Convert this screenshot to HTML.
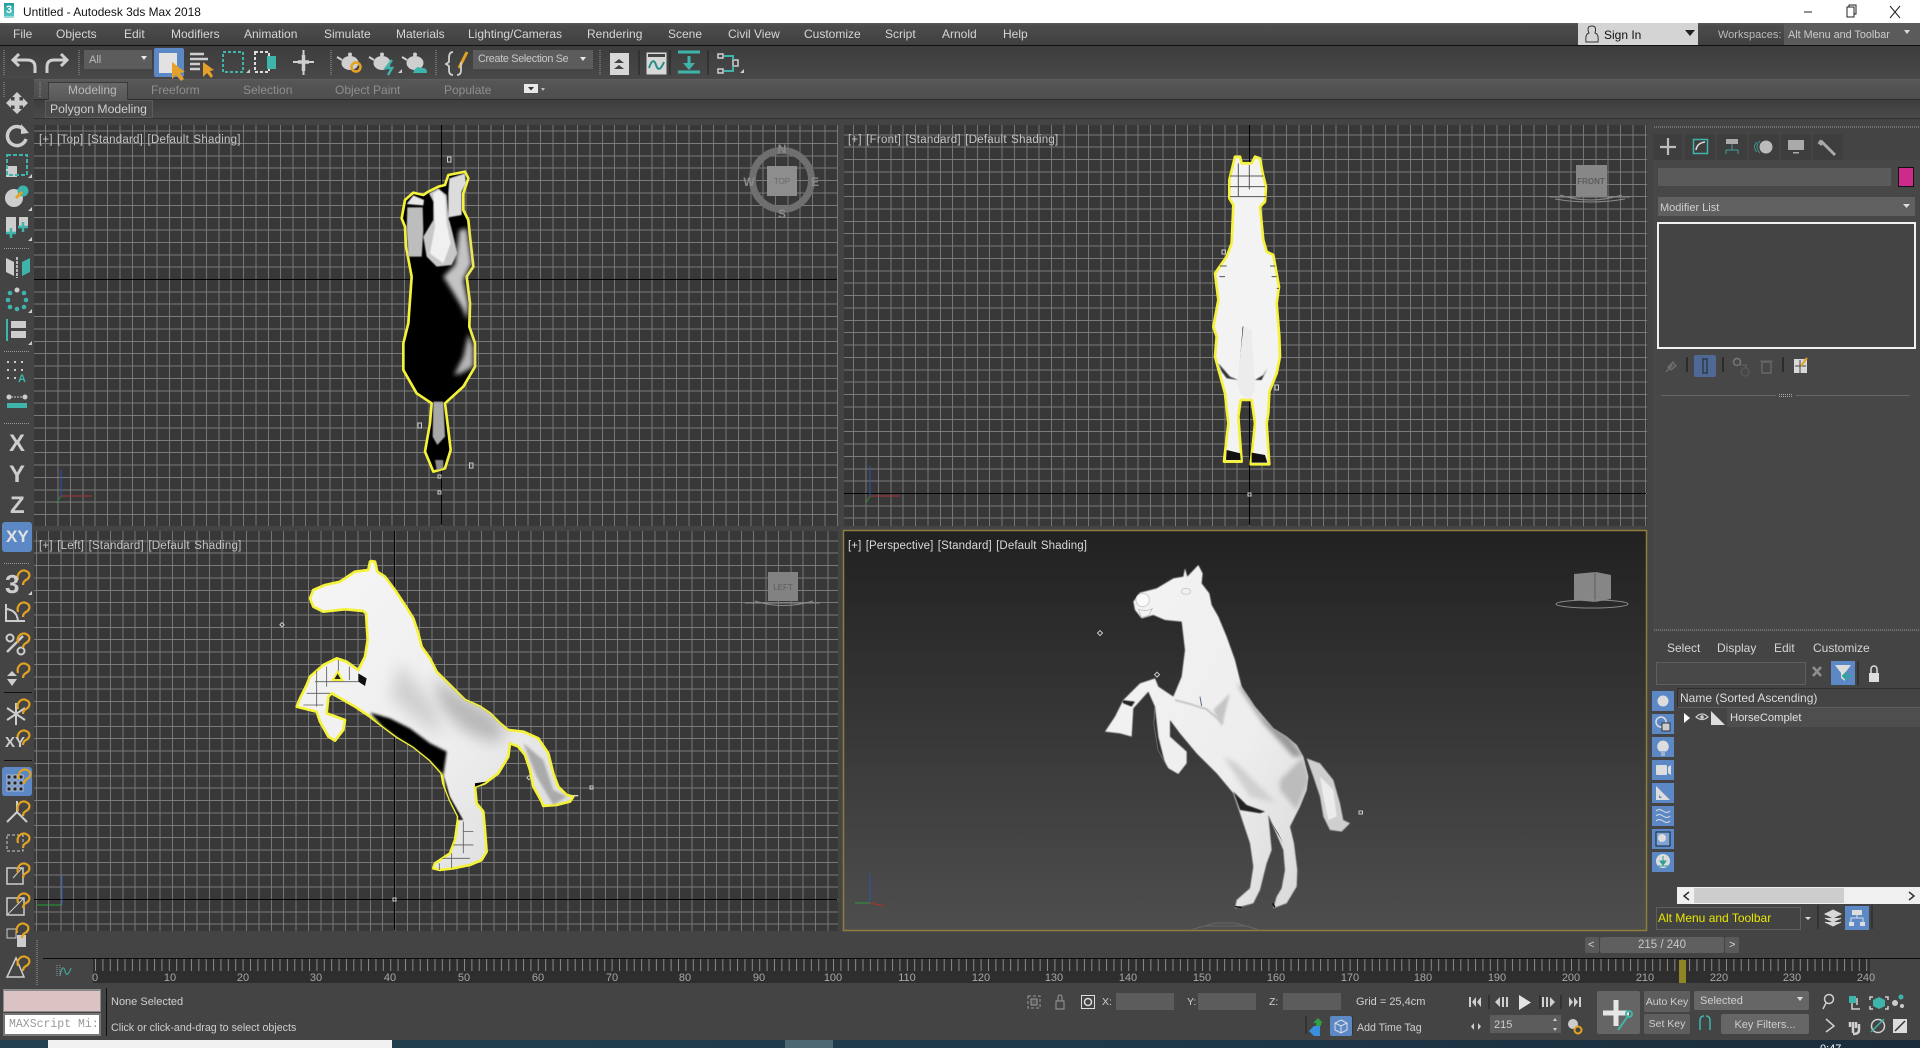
<!DOCTYPE html>
<html lang="en"><head><meta charset="utf-8"><title>Untitled - Autodesk 3ds Max 2018</title>
<style>
html,body{margin:0;padding:0;width:1920px;height:1048px;overflow:hidden;background:#444}
body{position:relative;font-family:"Liberation Sans",sans-serif}
div{position:absolute;box-sizing:border-box}
.t{white-space:nowrap;font-size:12px;line-height:14px;color:#d6d6d6}
.s{font-size:11px;color:#cfcfcf}
.vl{white-space:nowrap;font-size:11.5px;line-height:14px;color:#c4c4c4;letter-spacing:.23px;word-spacing:1px}
svg{position:absolute;left:0;top:0}
</style></head><body>

<div style="left:0;top:0;width:1920px;height:23px;background:#fff"></div>
<div style="left:4px;top:3px;width:10px;height:15px;background:linear-gradient(#1f9d9d,#57c4c4);border-bottom:2px solid #9ad8d8"></div>
<div class="t" style="left:5px;top:3px;width:8px;text-align:center;font-size:11px;font-weight:bold;color:#fff">3</div>
<div class="t" style="left:23px;top:5px;color:#111;font-size:11.9px">Untitled - Autodesk 3ds Max 2018</div>

<div style="left:0;top:23px;width:1920px;height:23px;background:linear-gradient(#5a5a5a 0,#4c4c4c 2px,#404040 100%);border-bottom:1px solid #111"></div>
<div class="t" style="left:13px;top:27px">File</div>
<div class="t" style="left:56px;top:27px">Objects</div>
<div class="t" style="left:124px;top:27px">Edit</div>
<div class="t" style="left:171px;top:27px">Modifiers</div>
<div class="t" style="left:244px;top:27px">Animation</div>
<div class="t" style="left:324px;top:27px">Simulate</div>
<div class="t" style="left:396px;top:27px">Materials</div>
<div class="t" style="left:468px;top:27px">Lighting/Cameras</div>
<div class="t" style="left:587px;top:27px">Rendering</div>
<div class="t" style="left:668px;top:27px">Scene</div>
<div class="t" style="left:728px;top:27px">Civil View</div>
<div class="t" style="left:804px;top:27px">Customize</div>
<div class="t" style="left:885px;top:27px">Script</div>
<div class="t" style="left:942px;top:27px">Arnold</div>
<div class="t" style="left:1003px;top:27px">Help</div>
<div style="left:1578px;top:23px;width:120px;height:22px;background:#d4d4d4"></div>
<div class="t" style="left:1604px;top:28px;color:#111">Sign In</div>
<div class="t" style="left:1718px;top:28px;color:#bbb;font-size:11px">Workspaces:</div>
<div style="left:1784px;top:23px;width:136px;height:22px;background:#5b5b5b"></div>
<div class="t" style="left:1788px;top:28px;font-size:10.8px;color:#ccc">Alt Menu and Toolbar</div>

<div style="left:0;top:46px;width:1920px;height:33px;background:linear-gradient(#3d3d3d,#484848)"></div>
<div style="left:84px;top:50px;width:68px;height:19px;background:#5c5c5c"></div>
<div class="t" style="left:89px;top:53px;font-size:11px;color:#bbb">All</div>
<div style="left:154px;top:48px;width:30px;height:29px;background:#5c88c6;border-radius:2px"></div>
<div style="left:473px;top:50px;width:120px;height:19px;background:#5c5c5c"></div>
<div class="t" style="left:478px;top:52px;font-size:10.8px;letter-spacing:-.3px;color:#c8c8c8">Create Selection Se</div>

<div style="left:34px;top:79px;width:1886px;height:21px;background:linear-gradient(#606060 0,#565656 2px,#4e4e4e 100%);border-bottom:1px solid #2c2c2c"></div>
<div style="left:48px;top:82px;width:80px;height:18px;background:linear-gradient(#676767,#585858);border:1px solid #3a3a3a;border-bottom:0"></div>
<div class="t" style="left:68px;top:83px;color:#b8b8b8">Modeling</div>
<div class="t" style="left:151px;top:83px;color:#8e8e8e">Freeform</div>
<div class="t" style="left:243px;top:83px;color:#8e8e8e">Selection</div>
<div class="t" style="left:335px;top:83px;color:#8e8e8e">Object Paint</div>
<div class="t" style="left:444px;top:83px;color:#8e8e8e">Populate</div>
<div style="left:34px;top:100px;width:1886px;height:19px;background:linear-gradient(#3d3d3d,#4a4a4a);border-bottom:1px solid #333"></div>
<div style="left:45px;top:100px;width:108px;height:18px;background:#4a4a4a;border:1px solid #5c5c5c"></div>
<div class="t" style="left:50px;top:102px;color:#cfcfcf;font-size:12.2px">Polygon Modeling</div>

<!-- backgrounds beneath the icon layer -->
<div style="left:1653px;top:160px;width:267px;height:472px;background:#474747"></div>
<div style="left:1490px;top:1015px;width:71px;height:18px;background:#5c5c5c"></div>
<div style="left:1694px;top:991px;width:115px;height:19px;background:#666;border-radius:2px"></div>
<div style="left:1677px;top:887px;width:243px;height:17px;background:#f0f0f0"></div>
<div style="left:1694px;top:888px;width:150px;height:15px;background:#cdcdcd"></div>

<!-- viewports -->
<svg width="1920" height="1048" viewBox="0 0 1920 1048">
<defs>
<pattern id="ticks" patternUnits="userSpaceOnUse" width="7.38" height="30" x="95" y="958"><rect width="1" height="13" fill="#8a8a8a"/></pattern>
<linearGradient id="pg" x1="0" y1="0" x2="0" y2="1"><stop offset="0" stop-color="#212121"/><stop offset="1" stop-color="#4e4e4e"/></linearGradient>
<linearGradient id="hl" x1="0" y1="0" x2="1" y2="1"><stop offset="0" stop-color="#f6f6f6"/><stop offset=".6" stop-color="#ededed"/><stop offset="1" stop-color="#d8d8d8"/></linearGradient>
<linearGradient id="hp" x1="0" y1="0" x2="1" y2="1"><stop offset="0" stop-color="#f4f4f4"/><stop offset=".6" stop-color="#eeeeee"/><stop offset="1" stop-color="#d8d8d8"/></linearGradient>
<filter id="b1" x="-5%" y="-5%" width="110%" height="110%"><feGaussianBlur stdDeviation="1.5"/></filter>
<filter id="b2" x="-30%" y="-30%" width="160%" height="160%"><feGaussianBlur stdDeviation="4"/></filter>
<filter id="b3" x="-40%" y="-40%" width="180%" height="180%"><feGaussianBlur stdDeviation="7"/></filter>
<filter id="b8" x="-60%" y="-60%" width="220%" height="220%"><feGaussianBlur stdDeviation="22"/></filter>
<clipPath id="lc"><path d="M245 93L255 95 262 125 285 140 315 180 345 225 370 265 385 310 395 350 420 385 440 425 480 465 525 510 570 530 600 550 630 580 655 600 700 605 745 625 775 670 790 730 805 770 830 795 850 800 840 815 800 825 760 828 755 815 730 770 720 720 705 675 685 650 660 640 655 680 625 730 585 760 555 770 560 820 580 845 585 900 590 965 575 990 540 1005 490 1015 450 1020 430 1015 435 1000 480 970 495 930 505 860 480 810 460 760 455 730 420 690 370 650 320 620 280 590 240 560 195 530 125 490 115 500 110 550 165 570 160 600 135 632 115 620 90 575 80 545 20 530 30 505 50 465 60 440 100 405 140 385 170 395 205 420 225 380 233 330 228 250 220 243 165 238 100 245 70 230 60 205 70 180 105 165 150 155 195 125 235 120 240 95Z"/></clipPath>
<clipPath id="pc"><path d="M285 55L292 80 325 45 338 70 335 100 358 130 365 165 385 200 410 260 435 330 455 410 495 470 550 535 590 560 620 585 640 620 655 680 650 720 630 770 600 830 612 880 622 960 620 1010 590 1060 550 1075 560 1040 575 1015 585 960 580 900 535 795 545 900 530 940 510 1020 490 1060 435 1075 440 1050 480 1015 490 950 480 880 450 790 430 730 380 670 320 610 270 550 240 510 240 560 290 605 290 640 265 672 235 655 205 600 192 520 195 470 175 425 130 475 125 560 90 550 45 545 75 500 100 450 150 400 195 385 205 410 250 440 275 380 285 300 275 215 225 210 190 195 155 205 135 180 130 155 150 128 200 115 250 85 280 80Z"/></clipPath>
<g id="mag"><path d="M-5 3C-7-4-1-8 3-6 8-4 7 1 3 3 1 4 0 6 0 8" fill="none" stroke="#e3a21f" stroke-width="2.2"/></g>
</defs>

<!-- grids drawn as dashed wide lines so each grid line lands on a whole pixel -->
<g shape-rendering="crispEdges" stroke-dasharray="1 11.37" fill="none">
<!-- Top -->
<rect x="34" y="125" width="804" height="401" fill="#383838" stroke="none"/>
<path d="M34 325.500H838" stroke="#767676" stroke-width="401" stroke-dashoffset="1.21"/>
<path d="M436 125V526" stroke="#7a7a7a" stroke-width="804" stroke-dashoffset="6.81"/>
<!-- Front -->
<rect x="844" y="125" width="803" height="401" fill="#383838" stroke="none"/>
<path d="M844 325.500H1647" stroke="#767676" stroke-width="401" stroke-dashoffset="3.21"/>
<path d="M1245.500 125V526" stroke="#7a7a7a" stroke-width="803" stroke-dashoffset="3.10"/>
<!-- Left -->
<rect x="34" y="531" width="804" height="400" fill="#383838" stroke="none"/>
<path d="M34 731H838" stroke="#767676" stroke-width="400" stroke-dashoffset="10.6"/>
<path d="M436 531V931" stroke="#7a7a7a" stroke-width="804" stroke-dashoffset="3.10"/>
</g>
<path d="M34 279.5H837M441.5 125V525" stroke="#000" stroke-width="1"/>
<path d="M844 493.5H1646M1249.5 125V525" stroke="#000" stroke-width="1"/>
<path d="M34 899.5H837M394.5 531V930" stroke="#000" stroke-width="1"/>
<!-- Perspective -->
<rect x="843.5" y="530.5" width="803" height="400" fill="url(#pg)" stroke="#8f7d3e" stroke-width="1.5"/>
<path d="M1190 930 1215 923H1235L1260 930M1205 926H1245" stroke="#666" fill="none"/>

<!-- Top horse -->
<g transform="translate(380 130) scale(.3333)">
<path d="M205 135 255 125 265 145 250 190 250 240 265 270 270 320 280 410 260 440 270 520 268 590 285 640 285 710 250 770 195 820 205 900 212 960 195 1015 160 1025 135 965 150 880 155 820 110 790 70 720 70 640 85 580 95 440 78 350 75 290 65 265 75 210 100 188 130 195 145 185 175 170 195 165Z" fill="#000" stroke="#f5f23a" stroke-width="8" stroke-linejoin="round"/>
<g filter="url(#b1)">
<path d="M82 232 128 232 130 300 125 380 85 380 80 300Z" fill="#bdbdbd"/>
<path d="M80 222 100 196 132 210 130 226 100 224Z" fill="#e8e8e8"/>
<path d="M208 145 255 130 258 160 245 185 245 255 205 262 205 190Z" fill="#dcdcdc"/>
<path d="M147 190 175 175 200 195 205 260 218 310 232 370 215 405 170 410 140 380 130 320 160 270 160 215Z" fill="#c8c8c8"/>
<path d="M160 190 178 180 195 200 200 280 212 340 190 400 150 370 165 290Z" fill="#f0f0f0"/>
<path d="M160 815 190 815 195 920 172 945 158 920Z" fill="#a8a8a8"/>
<path d="M165 990 190 990 190 1015 170 1020Z" fill="#888"/>
</g>
<path d="M238 300 260 295 275 400 250 450 265 520 262 570 245 530 215 480 190 440 225 405Z" fill="#c4c4c4" filter="url(#b3)"/>
<path d="M265 610 280 650 280 710 245 730 222 735 250 680Z" fill="#b5b5b5" filter="url(#b3)"/>
<path d="M205 268 255 268 258 285 230 292Z" fill="#000"/>
</g>
<g fill="none" stroke="#ccc" stroke-width="1">
<rect x="447.5" y="157" width="3.5" height="5"/><rect x="418" y="423" width="3.500" height="5"/><rect x="469.5" y="463" width="3.5" height="5"/><rect x="438" y="475" width="3" height="3"/><rect x="438" y="491" width="3" height="3"/>
<rect x="1222" y="250" width="3.5" height="4"/><rect x="1275" y="385" width="3.5" height="5"/><rect x="1248" y="493" width="3" height="3"/>
<rect x="393" y="898" width="3" height="3"/><rect x="590" y="786" width="3" height="3"/><rect x="281" y="623" width="3" height="3" transform="rotate(45 282 624)"/><rect x="528" y="776" width="3" height="3" transform="rotate(45 529 777)"/>
<rect x="1099" y="631" width="3.5" height="3.5" transform="rotate(45 1100 632)"/><rect x="1155" y="673" width="3.5" height="3.5" transform="rotate(45 1157 675)"/><rect x="1359" y="811" width="3.5" height="3"/>
</g>

<!-- Front horse -->
<g transform="translate(1180 130) scale(.3333)">
<path d="M165 80 180 80 185 100 215 100 225 80 240 85 248 130 258 170 255 215 240 230 250 330 260 365 280 375 290 430 297 470 290 520 298 620 300 680 290 730 268 785 265 850 260 880 268 1003 212 1003 218 950 225 880 215 810 182 810 175 860 185 995 132 995 145 880 135 790 105 680 110 620 100 590 115 510 105 430 140 380 155 340 160 225 148 205 148 150Z" fill="#f3f3f3" stroke="#f5f23a" stroke-width="8" stroke-linejoin="round"/>
<path d="M115 700 150 740 175 750 140 745 125 725ZM262 715 245 750 225 750 250 735Z" fill="#333" filter="url(#b1)"/>
<path d="M140 960 180 970 182 990 138 990ZM215 968 255 975 262 998 215 998Z" fill="#111"/>
<path d="M190 590 178 740" stroke="#111" stroke-width="4" fill="none"/>
<path d="M190 590 215 600 225 780 205 810 180 790 172 760Z" fill="#ececec"/>
<path d="M150 138H250M150 170H255M150 200H258M175 100V200M208 105V178M120 408H140M270 408H285M118 440H135M275 440H290M290 475H297" stroke="#555" stroke-width="3" fill="none"/>
</g>

<!-- Left horse -->
<g transform="translate(290 530) scale(.3333)">
<path d="M245 93L255 95 262 125 285 140 315 180 345 225 370 265 385 310 395 350 420 385 440 425 480 465 525 510 570 530 600 550 630 580 655 600 700 605 745 625 775 670 790 730 805 770 830 795 850 800 840 815 800 825 760 828 755 815 730 770 720 720 705 675 685 650 660 640 655 680 625 730 585 760 555 770 560 820 580 845 585 900 590 965 575 990 540 1005 490 1015 450 1020 430 1015 435 1000 480 970 495 930 505 860 480 810 460 760 455 730 420 690 370 650 320 620 280 590 240 560 195 530 125 490 115 500 110 550 165 570 160 600 135 632 115 620 90 575 80 545 20 530 30 505 50 465 60 440 100 405 140 385 170 395 205 420 225 380 233 330 228 250 220 243 165 238 100 245 70 230 60 205 70 180 105 165 150 155 195 125 235 120 240 95Z" fill="url(#hl)" stroke="#f5f23a" stroke-width="8" stroke-linejoin="round"/>
<g clip-path="url(#lc)">
<path d="M430 440 520 500 610 550 650 610 610 640 520 600 450 530Z" fill="#b8b8b8" filter="url(#b8)"/>
<path d="M330 400 430 520 460 620 380 570 300 500Z" fill="#d0d0d0" filter="url(#b8)"/>
<path d="M240 548 300 565 360 595 420 640 470 665 460 735 420 695 370 655 320 622 280 592Z" fill="#000" filter="url(#b2)"/>
<path d="M205 430 230 445 225 468 205 455Z" fill="#111"/>
<path d="M460 730 480 800 520 870 505 870 470 800Z" fill="#222" filter="url(#b1)"/>
<path d="M700 640 760 690 790 780 830 800 790 825 740 740Z" fill="#aaa" filter="url(#b2)"/>
<path d="M555 760 590 755 555 772Z" fill="#000"/>
<path d="M50 490H120M75 455H205M80 410V530M110 410V470M145 390V450M178 410V450M40 525H100M520 905H550M520 875V970M490 945H550M435 985H540M485 970V1015M448 1000V1020" stroke="#5a5a5a" stroke-width="2.500" fill="none"/>
</g>
<path d="M143 425 157 450H128Z" fill="#222" stroke="#f5f23a" stroke-width="6"/>
<path d="M850 797 865 797" stroke="#ddd" stroke-width="4"/>
</g>

<!-- Persp horse -->
<g transform="translate(1090 550) scale(.3333)">
<g filter="url(#b1)">
<path d="M285 55L292 80 325 45 338 70 335 100 358 130 365 165 385 200 410 260 435 330 455 410 495 470 550 535 590 560 620 585 640 620 655 680 650 720 630 770 600 830 612 880 622 960 620 1010 590 1060 550 1075 560 1040 575 1015 585 960 580 900 535 795 545 900 530 940 510 1020 490 1060 435 1075 440 1050 480 1015 490 950 480 880 450 790 430 730 380 670 320 610 270 550 240 510 240 560 290 605 290 640 265 672 235 655 205 600 192 520 195 470 175 425 130 475 125 560 90 550 45 545 75 500 100 450 150 400 195 385 205 410 250 440 275 380 285 300 275 215 225 210 190 195 155 205 135 180 130 155 150 128 200 115 250 85 280 80Z" fill="url(#hp)"/>
</g>
<g clip-path="url(#pc)">
<path d="M440 400 520 520 610 620 640 620 600 560 520 500 470 420Z" fill="#999" filter="url(#b3)"/>
<path d="M370 480 420 430 395 530Z" fill="#c4c4c4" filter="url(#b2)"/>
<path d="M570 690 640 620 660 690 620 780 570 720Z" fill="#bcbcbc" filter="url(#b3)"/>
<path d="M400 620 480 740 560 760 500 700 440 640Z" fill="#d0d0d0" filter="url(#b3)"/>
<path d="M430 725 470 765 525 785 510 790 450 780Z" fill="#222" filter="url(#b1)"/>
<path d="M195 470 205 560 225 640 205 620 190 520Z" fill="#333" filter="url(#b1)"/>
<path d="M95 450 135 455 125 470 100 460Z" fill="#222" filter="url(#b1)"/>
<path d="M530 795 580 880 565 850Z" fill="#444"/>
</g>
<path d="M650 625 690 640 730 690 750 760 760 810 780 820 755 845 720 840 700 800 690 740 670 680Z" fill="#cfcfcf" filter="url(#b1)"/>
<path d="M690 680 730 720 740 800 715 810 700 740Z" fill="#ececec" filter="url(#b1)"/>
<path d="M330 440 335 468" stroke="#5a6a80" stroke-width="3"/>
<path d="M255 450 300 462 350 478 400 520" stroke="#c7c7c7" stroke-width="6" fill="none" filter="url(#b1)"/>
<ellipse cx="158" cy="150" rx="20" ry="20" fill="#fafafa" stroke="#ccc" stroke-width="3"/>
<path d="M145 178q25 8 42-2l-10 20-22 6Z" fill="#f5f5f5" stroke="#bbb" stroke-width="2"/>
<ellipse cx="288" cy="124" rx="14" ry="9" fill="none" stroke="#ccc" stroke-width="3"/>
<path d="M435 1070 455 1072M548 1060 555 1072" stroke="#000" stroke-width="4"/>
</g>

<!-- view cubes -->
<g>
<circle cx="782" cy="180" r="29.5" fill="none" stroke="#6f6f6f" stroke-width="7"/>
<rect x="767" y="166" width="30" height="30" fill="#8d8d8d"/>
<text x="782" y="184" font-size="8" fill="#6a6a6a" text-anchor="middle" font-family="Liberation Sans">TOP</text>
<g font-family="Liberation Sans" font-weight="bold" font-size="12" fill="#8a8a8a" text-anchor="middle"><text x="782" y="153">N</text><text x="815" y="186">E</text><text x="782" y="218">S</text><text x="749" y="186">W</text></g>
<rect x="1576" y="165" width="31" height="31" fill="#878787"/>
<text x="1591" y="184" font-size="8" font-weight="bold" fill="#5c5c5c" text-anchor="middle" font-family="Liberation Sans">FRONT</text>
<path d="M1550 197H1630M1560 195q30 10 62 0M1555 199q35 6 70 0" stroke="#8a8a8a" fill="none"/>
<rect x="768" y="572" width="30" height="29" fill="#828282"/>
<text x="783" y="590" font-size="8" fill="#5c5c5c" text-anchor="middle" font-family="Liberation Sans">LEFT</text>
<path d="M745 603H820M755 601q28 9 58 0" stroke="#8a8a8a" fill="none"/>
<path d="M1574 574 1596 572 1611 575V599L1595 602 1574 600Z" fill="#868686"/>
<path d="M1595 572V602" stroke="#5f5f5f"/>
<ellipse cx="1592" cy="604" rx="36" ry="4" fill="none" stroke="#8a8a8a"/>
</g>

<!-- axes -->
<g stroke-width="1" fill="none">
<path d="M61 496H92" stroke="#a33"/><path d="M61 496V470" stroke="#2a55b0"/><path d="M61 496 56 503" stroke="#2c8a3a"/>
<path d="M870 496H900" stroke="#a33"/><path d="M870 496V466" stroke="#2a55b0"/><path d="M870 496 866 503" stroke="#2c8a3a"/>
<path d="M62 905V875" stroke="#2a55b0"/><path d="M62 905H36" stroke="#2c9a3a"/>
<path d="M870 903V874" stroke="#2a55b0"/><path d="M870 903H855" stroke="#2c9a3a"/><path d="M870 903 884 906" stroke="#a33"/>
</g>

<!-- toolbar icons -->
<g fill="none" stroke="#cfcfcf">
<path d="M19 54 13 60 19 66M13 60H27Q35 60 35 67V73" stroke-width="3"/>
<path d="M61 54 67 60 61 66M67 60H54Q47 60 47 67V73" stroke-width="3"/>
<g stroke-dasharray="1 1" stroke="#9a9a9a"><path d="M4 50V75M79 50V75M331 50V75M436 50V75M600 50V75M4 82V98M40 82V98"/></g>
<rect x="159" y="53" width="18" height="20" fill="#e2e2e2" stroke="none"/>
<path d="M172 62 172 79 176 75 181 81 184 79 180 73 185 72Z" fill="#e5a02a" stroke="none"/>
<path d="M190 54H204M190 59H208M190 64H200M190 69H200" stroke-width="2.5"/>
<path d="M203 62 203 77 207 73 211 78 213 76 210 71 214 70Z" fill="#e5a02a" stroke="none"/>
<rect x="223" y="52" width="20" height="20" stroke="#3fb4ab" stroke-width="2" stroke-dasharray="3 2"/>
<rect x="255" y="52" width="14" height="20" stroke="#ddd" stroke-width="2" stroke-dasharray="3 2"/>
<rect x="267" y="56" width="9" height="13" fill="#3fb4ab" stroke="none"/>
<path d="M303.500 50V75M293 62H314" stroke-width="2"/><path d="M303.500 55V71M298 62H309" stroke-width="3.5"/>
<g fill="#cfcfcf" stroke="none"><ellipse cx="350" cy="63" rx="8.500" ry="7"/><circle cx="350" cy="54.500" r="2"/><ellipse cx="382" cy="63" rx="8.500" ry="7"/><circle cx="382" cy="54.500" r="2"/><ellipse cx="415" cy="63" rx="8.500" ry="7"/><circle cx="415" cy="54.500" r="2"/></g>
<path d="M342 60 337 57M374 60 369 57M407 60 402 57" stroke-width="2"/>
<circle cx="356" cy="67" r="4.500" stroke="#e3a21f" stroke-width="2.500"/>
<path d="M392 60 386 68H392L388 75" stroke="#3fb4ab" stroke-width="2.500"/>
<path d="M413 73q3-8 8-5 6-1 6 5Z" fill="#3fb4ab" stroke="none"/>
<path d="M453 52Q449 52 449 58V62L446 64 449 66V70Q449 75 453 75" stroke-width="1.800"/>
<path d="M459 68 467 52" stroke="#e3a21f" stroke-width="3"/>
<path d="M461 62V70Q461 75 457 75" stroke-width="1.800"/>
<rect x="610" y="53" width="19" height="22" fill="#d8d8d8" stroke="none"/><path d="M619 59 624 63H614ZM619 65 624 69H614Z" fill="#444" stroke="none"/>
<path d="M639 50V75M670 50V75M708 50V75" stroke="#222"/>
<rect x="646.500" y="52.500" width="20" height="22" fill="#d8d8d8" stroke="none"/><rect x="648" y="54" width="17" height="3" fill="#444" stroke="none"/>
<path d="M649 68Q653 56 656 65T664 62" stroke="#268f88" stroke-width="2"/>
<path d="M678 52H700M678 72H700" stroke="#3fb4ab" stroke-width="3"/><path d="M689 56V66" stroke="#3fb4ab" stroke-width="3"/><path d="M683 63H695L689 70Z" fill="#3fb4ab" stroke="none"/>
<path d="M718 54h5v4h-5ZM718 69h5v4h-5ZM733 60h5v6h-5Z" stroke-width="1.500"/><path d="M724 56H733V60M724 71H733V66" stroke="#3fb4ab" stroke-width="2"/>
</g>
<g fill="#e8e8e8"><path d="M141 56h6l-3 4ZM580 57h6l-3 4Z"/><path d="M524 84h14v9h-14Z"/><path d="M541 88h4l-2 3Z" fill="#bbb"/></g>
<path d="M528 87h6l-3 3.500Z" fill="#333"/>
<path d="M246 73l4-4v4ZM398 73l4-4v4ZM740 73l4-4v4Z" fill="#ccc"/>
<path d="M1804 12h8" stroke="#222" stroke-width="1"/>
<rect x="1847" y="7" width="7" height="10" fill="#fff" stroke="#222"/><path d="M1849 7V5H1856V14H1854" fill="none" stroke="#222"/>
<path d="M1890 6 1900 18M1900 6 1890 18" stroke="#222" stroke-width="1"/>
<path d="M1586 42q-1-8 3-9-3-7 3-7 5 0 3 7 4 1 3 9Z" fill="none" stroke="#333"/>
<path d="M1685 30h10l-5 6Z" fill="#222"/>
<path d="M1904 30h6l-3 4Z" fill="#ddd"/>

<!-- left tools -->
<g fill="#cdcdcd">
<path transform="translate(17 103)" d="M0-11 5-6H2.500V-2.500H6V-5L11 0 6 5V2.500H2.500V6H5L0 11-5 6H-2.500V2.500H-6V5L-11 0-6-5V-2.500H-2.500V-6H-5Z"/>
<path d="M25 131A9.500 9.500 0 1 0 26 139" fill="none" stroke="#cdcdcd" stroke-width="3.500"/><path d="M21 124 21 134 29 133Z"/>
<rect x="6" y="166" width="11" height="11"/>
<rect x="7" y="155" width="20" height="20" fill="none" stroke="#3fb4ab" stroke-width="2" stroke-dasharray="4 2"/>
<circle cx="14" cy="198" r="9"/><circle cx="23" cy="191" r="5.500" fill="#3fb4ab"/><path d="M16 198 22 192" stroke="#e3a21f" stroke-width="3"/>
<rect x="6" y="217" width="10" height="15"/><rect x="19" y="217" width="9" height="9"/><path d="M11 228V238M6 233H16M23 222V232M18 227H28" stroke="#3fb4ab" stroke-width="2.500" fill="none"/>
<path d="M6 258 14 262V276L6 272Z"/><path d="M22 262 30 258V272L22 276Z" fill="#3fb4ab"/><path d="M17 257V278" stroke="#ddd" stroke-width="1.500" stroke-dasharray="3 1"/>
<g fill="#3fb4ab"><circle cx="17" cy="290" r="2.500" fill="#cdcdcd"/><circle cx="24" cy="293" r="2.300"/><circle cx="26" cy="300" r="2.300"/><circle cx="24" cy="307" r="2.300"/><circle cx="17" cy="309" r="2.300"/><circle cx="10" cy="307" r="2.300"/><circle cx="8" cy="300" r="2.300"/><circle cx="10" cy="293" r="2.300"/></g>
<rect x="11" y="321" width="15" height="7"/><rect x="11" y="331" width="15" height="7"/><path d="M7 319V341" stroke="#3fb4ab" stroke-width="2"/>
<g><rect x="7" y="361" width="2" height="2"/><rect x="14" y="361" width="2" height="2"/><rect x="21" y="361" width="2" height="2"/><rect x="7" y="369" width="2" height="2"/><rect x="14" y="369" width="2" height="2"/><rect x="21" y="369" width="2" height="2"/><rect x="7" y="377" width="2" height="2"/><rect x="14" y="377" width="2" height="2"/></g>
<circle cx="9" cy="397" r="2.500"/><circle cx="25" cy="397" r="2.500"/><path d="M11 397H23" stroke="#cdcdcd" stroke-dasharray="2 1"/>
<rect x="7" y="403" width="20" height="5" fill="#3fb4ab"/>
<path d="M4 248.500H30M4 351.500H30M4 423.500H30M4 563.500H30M4 563.500H30" stroke="#9b9b9b" stroke-dasharray="1 1" fill="none"/>
<path d="M4 692.500H32M4 760.500H32" stroke="#111" fill="none"/>
<rect x="2" y="522" width="30" height="30" rx="3" fill="#5c88c6"/>
<rect x="2" y="767" width="30" height="29" rx="3" fill="#5c88c6"/>
<g><rect x="7" y="775" width="19" height="17" fill="none"/><path d="M7 775h4v4h-4zM13 775h4v4h-4zM19 775h4v4h-4zM7 781h4v4h-4zM13 781h4v4h-4zM19 781h4v4h-4zM7 787h4v4h-4zM13 787h4v4h-4zM19 787h4v4h-4z" fill="#222" stroke="#cfd8e8" stroke-width=".8"/></g>
<path d="M6 604V621H25M6 609Q17 610 18 621" fill="none" stroke="#cdcdcd" stroke-width="2"/>
<path d="M7 652 23 636" stroke="#cdcdcd" stroke-width="2.500"/><circle cx="10" cy="638" r="3.500" fill="none" stroke="#cdcdcd" stroke-width="2"/><circle cx="21" cy="651" r="3.500" fill="none" stroke="#cdcdcd" stroke-width="2"/>
<path d="M12 671 17 676H7ZM12 686 17 679H7Z"/>
<path d="M16 703V725M7 708 25 720M25 708 7 720" stroke="#cdcdcd" stroke-width="2" fill="none"/>
<path d="M17 812V801M17 812 7 822M17 812 27 822" stroke="#cdcdcd" stroke-width="2" fill="none"/>
<rect x="7" y="835" width="16" height="16" fill="none" stroke="#cdcdcd" stroke-dasharray="3 2"/>
<rect x="7" y="868" width="16" height="16" fill="none" stroke="#cdcdcd" stroke-width="1.500"/><path d="M13 878 22 868" stroke="#cdcdcd"/>
<rect x="7" y="898" width="17" height="17" fill="none" stroke="#cdcdcd" stroke-width="1.500"/><path d="M7 915 24 898" stroke="#cdcdcd"/>
<rect x="7" y="929" width="9" height="9" fill="none" stroke="#cdcdcd"/><rect x="17" y="935" width="9" height="12"/>
<path d="M7 977 16 958 24 977Z" fill="none" stroke="#cdcdcd" stroke-width="1.500"/>
</g>
<text x="18" y="382" font-size="11" font-weight="bold" fill="#3fb4ab" font-family="Liberation Sans">A</text>
<g><use href="#mag" x="23" y="577"/><use href="#mag" x="23" y="609"/><use href="#mag" x="23" y="640"/><use href="#mag" x="23" y="670"/><use href="#mag" x="23" y="706"/><use href="#mag" x="23" y="737"/><use href="#mag" x="24" y="776"/><use href="#mag" x="23" y="808"/><use href="#mag" x="23" y="840"/><use href="#mag" x="23" y="870"/><use href="#mag" x="23" y="900"/><use href="#mag" x="22" y="930"/><use href="#mag" x="23" y="963"/></g>
<path d="M28 178l4-4v4ZM28 211l4-4v4ZM28 241l4-4v4ZM28 313l4-4v4ZM28 345l4-4v4ZM28 595l4-4v4Z" fill="#ccc"/>
<path d="M37 940V985" stroke="#9b9b9b" stroke-dasharray="1 1"/>

<!-- right panel icons -->
<path d="M1654 127H1920" stroke="#9b9b9b" stroke-dasharray="1 1"/>
<path d="M1654 630H1920" stroke="#9b9b9b" stroke-dasharray="1 1"/>
<g>
<path d="M1653 160V137q0-3 3-3h23q3 0 3 3V160M1685 160V137q0-3 3-3h24q3 0 3 3V160M1717 160V137q0-3 3-3h24q3 0 3 3V160M1749 160V137q0-3 3-3h24q3 0 3 3V160M1781 160V137q0-3 3-3h24q3 0 3 3V160M1813 160V137q0-3 3-3h24q3 0 3 3V160" fill="#3e3e3e"/>
<path d="M1668 138V155M1660 147H1676" stroke="#bcbcbc" stroke-width="2.200"/>
<rect x="1693.500" y="139.500" width="14" height="14" fill="none" stroke="#3fb4ab" stroke-width="1.500"/><path d="M1696 150Q1697 143 1705 142" stroke="#ddd" fill="none" stroke-width="1.500"/>
<rect x="1726" y="139" width="12" height="5" fill="#aaa"/><path d="M1732 144V150M1726 154V150H1738V154" stroke="#3fa09a" fill="none"/>
<circle cx="1766" cy="147" r="6.500" fill="#bbb"/><path d="M1760 141Q1754 147 1760 153M1757 142Q1752 147 1757 152" stroke="#3f8f8a" fill="none"/>
<rect x="1788" y="140" width="16" height="10" fill="#aaa"/><rect x="1793" y="152" width="6" height="1.500" fill="#aaa"/>
<path d="M1821 141 1835 155" stroke="#aaa" stroke-width="3"/><path d="M1821 140l-2 3 3 2" stroke="#aaa" fill="none" stroke-width="2"/>
<path d="M1666 372 1672 365M1668 367l5-5 3 4-5 4Z" stroke="#777" fill="#555"/>
<path d="M1687 357V372M1723 357V372M1783 357V372" stroke="#111"/>
<rect x="1694" y="355" width="22" height="22" rx="2" fill="#4e6a94"/>
<path d="M1702 359H1708M1703 359V373H1707V359M1702 373H1708" stroke="#2f3b4c" fill="none" stroke-width="1.500"/>
<circle cx="1737" cy="362" r="3.500" fill="none" stroke="#777" stroke-width="1.500"/><circle cx="1745" cy="372" r="4" fill="none" stroke="#555" stroke-width="1.500"/><path d="M1740 365h6v3" stroke="#666" fill="none"/>
<rect x="1762" y="362" width="9" height="11" fill="none" stroke="#666" stroke-width="1.500"/><path d="M1760 361H1773" stroke="#666"/>
<rect x="1794" y="359" width="13" height="14" fill="#d8d8d8"/><path d="M1795 366H1806M1800 360V373" stroke="#444"/><path d="M1801 366 1807 358" stroke="#e3a21f" stroke-width="2"/>
<path d="M1661 395.500H1776M1796 395.500H1910" stroke="#666"/><path d="M1779 394.500H1792M1779 396.500H1792" stroke="#aaa" stroke-dasharray="1 1"/>
<rect x="1652" y="691" width="22" height="20" fill="#5c88c6"/><rect x="1652" y="714" width="22" height="20" fill="#5c88c6"/><rect x="1652" y="737" width="22" height="20" fill="#5c88c6"/><rect x="1652" y="760" width="22" height="20" fill="#5c88c6"/><rect x="1652" y="783" width="22" height="20" fill="#5c88c6"/><rect x="1652" y="806" width="22" height="20" fill="#5c88c6"/><rect x="1652" y="829" width="22" height="20" fill="#5c88c6"/><rect x="1652" y="852" width="22" height="20" fill="#5c88c6"/>
<circle cx="1663" cy="701" r="5.500" fill="#dcdcdc"/>
<circle cx="1661" cy="722" r="5" fill="none" stroke="#ddd" stroke-width="1.500"/><rect x="1662" y="723" width="8" height="8" fill="#ccc" stroke="#333"/>
<path d="M1663 741a5.500 5.500 0 0 1 3 10h-6a5.500 5.500 0 0 1 3-10ZM1661 753h4M1661 755h4" fill="#ddd" stroke="#ddd"/>
<rect x="1656" y="765" width="11" height="10" rx="1" fill="#ddd"/><path d="M1668 767 1671 765V775L1668 773Z" fill="#ddd"/>
<path d="M1656 786V800H1670Z" fill="#ddd"/><path d="M1659 795v3h3Z" fill="#5c88c6"/>
<path d="M1656 811q3-3 7 0t7 0M1656 816q3-3 7 0t7 0M1656 821q3-3 7 0t7 0" stroke="#ddd" fill="none"/>
<rect x="1656" y="832" width="14" height="14" fill="#7fa3d3" stroke="#123"/><circle cx="1662" cy="838" r="4" fill="#ddd"/>
<circle cx="1663" cy="861" r="7" fill="#ddd"/><path d="M1663 856V862M1660 861H1666L1663 865ZM1658 866H1668" stroke="#2f9e96" fill="#2f9e96"/>
<path d="M1813 667 1821 676M1821 667 1813 676" stroke="#8f8f8f" stroke-width="2.500"/>
<rect x="1831" y="661" width="24" height="24" fill="#5c88c6"/><path d="M1835 665H1851L1845 673V681L1841 678V673Z" fill="#ddd"/><path d="M1844 676H1852M1847 672 1843 676 1847 680" stroke="#2fa69c" fill="none" stroke-width="2"/>
<path d="M1858 661V685M1818 905V929M1872 905V929" stroke="#222"/>
<rect x="1869" y="673" width="10" height="9" fill="#ddd"/><path d="M1871 673V669a3 3 0 0 1 6 0V673" fill="none" stroke="#ddd" stroke-width="1.500"/>
<path d="M1684 713 1690 718 1684 723Z" fill="#fff"/>
<path d="M1696 717q6-6 12 0-6 5-12 0Z" fill="none" stroke="#ccc" stroke-width="1.200"/><circle cx="1702" cy="717" r="1.800" fill="#ccc"/>
<path d="M1711 711V725H1725Z" fill="#ddd"/>
<path d="M1689 892 1684 896 1689 900" stroke="#333" stroke-width="1.500" fill="none"/><path d="M1909 892 1914 896 1909 900" stroke="#333" stroke-width="1.500" fill="none"/>
<path d="M1805 917h6l-3 3Z" fill="#ddd"/>
<path d="M1833 910 1841 914 1833 918 1825 914ZM1825 918 1833 922 1841 918M1825 922 1833 926 1841 922" fill="#d8d8d8" stroke="#d8d8d8"/>
<rect x="1845" y="906" width="24" height="24" fill="#5c88c6"/><rect x="1852" y="910" width="10" height="5" fill="#ddd"/><path d="M1857 915V918M1851 922V918H1863V922" stroke="#ddd" fill="none"/><rect x="1849" y="922" width="5" height="4" fill="#ddd"/><rect x="1860" y="922" width="5" height="4" fill="#ddd"/>
</g>

<!-- timeline -->
<path d="M43 958.500H1920" stroke="#0c0c0c"/>
<rect x="93" y="959" width="1777" height="24" fill="#2e2e2e"/>
<rect x="93" y="959" width="1777" height="24" fill="url(#ticks)"/>
<path d="M57 965V977M60 965V977" stroke="#999" stroke-dasharray="1 1"/><path d="M60 975Q63 963 65 971T71 968" stroke="#3fb4ab" fill="none"/>
<rect x="1679" y="960" width="7" height="23" fill="#8e8624"/>
<g font-size="11" fill="#a8a8a8" text-anchor="middle" font-family="Liberation Sans">
<text x="95" y="981">0</text><text x="170" y="981">10</text><text x="243" y="981">20</text><text x="316" y="981">30</text><text x="390" y="981">40</text><text x="464" y="981">50</text><text x="538" y="981">60</text><text x="612" y="981">70</text><text x="685" y="981">80</text><text x="759" y="981">90</text><text x="833" y="981">100</text><text x="907" y="981">110</text><text x="981" y="981">120</text><text x="1054" y="981">130</text><text x="1128" y="981">140</text><text x="1202" y="981">150</text><text x="1276" y="981">160</text><text x="1350" y="981">170</text><text x="1423" y="981">180</text><text x="1497" y="981">190</text><text x="1571" y="981">200</text><text x="1645" y="981">210</text><text x="1719" y="981">220</text><text x="1792" y="981">230</text><text x="1866" y="981">240</text>
</g>

<!-- coordinate & playback icons -->
<g fill="none" stroke="#9a9a9a">
<rect x="1028" y="996" width="12" height="12" stroke-dasharray="3 2"/><rect x="1031" y="999" width="6" height="6" fill="#555"/>
<rect x="1056" y="1001" width="8" height="8"/><path d="M1058 1001V997a2 2 0 0 1 4 0V1001"/>
<rect x="1081.500" y="995.500" width="13" height="13" stroke="#ddd"/><circle cx="1088" cy="1002" r="3.500" stroke="#ddd" stroke-width="1.500"/>
</g>
<g fill="#cfcfcf">
<path d="M1469 997h2v10h-2ZM1476 997v10l-4-5ZM1481 997v10l-4-5Z"/>
<path d="M1500 997v10l-5-5ZM1502 997h2v10h-2ZM1506 997h2v10h-2Z"/>
<path d="M1519 995V1010L1531 1002.500Z" fill="#e4e4e4"/>
<path d="M1542 997h2v10h-2ZM1546 997h2v10h-2ZM1550 997l5 5-5 5Z"/>
<path d="M1569 997l4 5-4 5ZM1574 997l4 5-4 5ZM1579 997h2v10h-2Z"/>
<path d="M1474 1023l-3 3.500 3 3.500ZM1478 1023l3 3.500-3 3.500Z"/>
<path d="M1489 995V1009M1540 995V1009M1561 995V1009" stroke="#222"/>
<path d="M1553 1021l2-3 2 3ZM1553 1028l2 3 2-3Z"/>
<circle cx="1573" cy="1024" r="5" fill="#ccc"/><circle cx="1578" cy="1030" r="3.500" fill="none" stroke="#e3a21f" stroke-width="2"/>
</g>
<path d="M1306 1016V1034M1352 1016V1034" stroke="#222"/>
<path d="M1318 1018 1323 1023H1313Z" fill="#2ea043"/><rect x="1316" y="1023" width="5" height="3" fill="#2ea043"/>
<path d="M1314 1026 1309 1031 1314 1036H1320V1026Z" fill="#3a8fdc"/>
<rect x="1330" y="1016" width="22" height="20" rx="2" fill="#5c88c6"/>
<path d="M1341 1020 1347 1023V1030L1341 1033 1335 1030V1023ZM1335 1023 1341 1026 1347 1023M1341 1026V1033" fill="none" stroke="#e0e0e0"/>
<rect x="1597" y="991" width="43" height="43" rx="2" fill="#656565"/>
<path d="M1616 1000V1026M1603 1013H1629" stroke="#e6e6e6" stroke-width="5"/>
<path d="M1618 1030 1628 1016" stroke="#3fb4ab" stroke-width="2"/><circle cx="1629" cy="1014" r="3" fill="none" stroke="#3fb4ab" stroke-width="2"/>
<path d="M1700 1030V1021Q1700 1016 1704 1016M1710 1030V1021Q1710 1016 1706 1016" fill="none" stroke="#3fb4ab" stroke-width="1.500"/>
<path d="M1797 997h6l-3 4Z" fill="#ddd"/>
<g fill="none" stroke="#d0d0d0" stroke-width="1.500">
<circle cx="1829" cy="999" r="4.500"/><path d="M1826 1003 1823 1009"/>
<rect x="1849" y="996" width="7" height="7" fill="#3fb4ab" stroke="none"/><path d="M1852 1003V1009H1860M1857 998V1005"/>
<path d="M1873 997h-3v3M1885 997h3v3M1873 1009h-3v-3M1885 1009h3v-3"/><path d="M1879 997 1885 1000V1006L1879 1009 1873 1006V1000Z" fill="#3fb4ab" stroke="none"/>
<circle cx="1895" cy="1003" r="3" fill="#ccc" stroke="none"/><circle cx="1901" cy="997" r="2.500" fill="#3fb4ab" stroke="none"/><circle cx="1902" cy="1006" r="2" fill="#ccc" stroke="none"/>
<path d="M1826 1019 1834 1026 1826 1032"/>
<path d="M1853 1033V1022M1850 1027V1022M1856 1022V1028M1859 1024V1030Q1859 1034 1853 1034" stroke-width="2.500"/>
<circle cx="1878" cy="1026" r="6.500"/><path d="M1871 1032 1884 1019" stroke="#3fb4ab"/>
<rect x="1893" y="1019" width="14" height="14" fill="#ddd" stroke="none"/><path d="M1895 1031 1905 1021" stroke="#333"/>
</g>
</svg>

<!-- viewport labels -->
<div class="vl" style="left:39px;top:133px">[+] [Top] [Standard] [Default Shading]</div>
<div class="vl" style="left:848px;top:133px">[+] [Front] [Standard] [Default Shading]</div>
<div class="vl" style="left:39px;top:539px">[+] [Left] [Standard] [Default Shading]</div>
<div class="vl" style="left:848px;top:539px;color:#dadada;letter-spacing:.1px">[+] [Perspective] [Standard] [Default Shading]</div>

<!-- left tool letters -->
<div class="t" style="left:9px;top:431px;font-size:24px;line-height:26px;font-weight:bold;color:#cdcdcd">X</div>
<div class="t" style="left:9px;top:462px;font-size:24px;line-height:26px;font-weight:bold;color:#cdcdcd">Y</div>
<div class="t" style="left:10px;top:493px;font-size:24px;line-height:26px;font-weight:bold;color:#cdcdcd">Z</div>
<div class="t" style="left:6px;top:528px;font-size:17px;line-height:18px;font-weight:bold;color:#e2e2e2">XY</div>
<div class="t" style="left:5px;top:570px;font-size:26px;line-height:28px;font-weight:bold;color:#cdcdcd">3</div>
<div class="t" style="left:5px;top:735px;font-size:15px;line-height:16px;font-weight:bold;color:#cdcdcd">XY</div>

<!-- command panel -->
<div style="left:1658px;top:168px;width:233px;height:18px;background:#5a5a5a"></div>
<div style="left:1898px;top:167px;width:16px;height:20px;background:#cd2b8b;border:1px solid #111"></div>
<div style="left:1658px;top:197px;width:257px;height:19px;background:#606060"></div>
<div class="t" style="left:1660px;top:201px;font-size:11px;color:#d0d0d0">Modifier List</div>
<svg width="12" height="12" style="left:1900px;top:201px"><path d="M3 3h7l-3.500 4Z" fill="#ddd"/></svg>
<div style="left:1657px;top:222px;width:259px;height:127px;background:#444;border:2px solid #f0f0f0"></div>

<!-- scene explorer -->
<div class="t" style="left:1667px;top:641px">Select</div>
<div class="t" style="left:1717px;top:641px">Display</div>
<div class="t" style="left:1774px;top:641px">Edit</div>
<div class="t" style="left:1813px;top:641px">Customize</div>
<div style="left:1656px;top:662px;width:150px;height:23px;background:#484848;border:1px solid #5f5f5f"></div>
<div style="left:1677px;top:688px;width:243px;height:20px;border-top:1px solid #2f2f2f;border-bottom:1px solid #5c5c5c;border-left:1px solid #2f2f2f"></div>
<div class="t" style="left:1680px;top:691px;color:#dcdcdc">Name (Sorted Ascending)</div>
<div style="left:1727px;top:708px;width:193px;height:19px;background:#4e4e4e"></div>
<div class="t" style="left:1730px;top:711px;color:#e0e0e0;font-size:11.2px">HorseComplet</div>
<div style="left:1656px;top:907px;width:145px;height:23px;background:#434343;border:1px solid #5f5f5f"></div>
<div class="t" style="left:1658px;top:911px;color:#e8e800">Alt Menu and Toolbar</div>

<!-- time slider -->
<div style="left:1585px;top:937px;width:14px;height:16px;background:#5a5a5a;border-radius:2px"></div>
<div class="t" style="left:1588px;top:938px;font-size:11px">&lt;</div>
<div style="left:1600px;top:937px;width:124px;height:16px;background:#5f5f5f;border-radius:2px"></div>
<div class="t" style="left:1600px;top:938px;width:124px;text-align:center;font-size:11.5px;color:#c8c8c8">215 / 240</div>
<div style="left:1725px;top:937px;width:14px;height:16px;background:#5a5a5a;border-radius:2px"></div>
<div class="t" style="left:1729px;top:938px;font-size:11px">&gt;</div>

<!-- bottom -->
<div style="left:3px;top:989px;width:98px;height:23px;background:#dcc3c3;border:1px solid #8a8a8a;border-width:2px 1px 1px"></div>
<div style="left:3px;top:1013px;width:98px;height:23px;background:#fff;border:2px solid #777"></div>
<div class="t" style="left:9px;top:1018px;font-family:'Liberation Mono',monospace;font-size:11.5px;color:#999">MAXScript Mi:</div>
<div style="left:106px;top:988px;width:1px;height:48px;background:#111"></div>
<div class="t s" style="left:111px;top:995px">None Selected</div>
<div class="t s" style="left:111px;top:1021px;font-size:10.7px">Click or click-and-drag to select objects</div>
<div class="t s" style="left:1102px;top:995px;font-size:10.5px">X:</div>
<div style="left:1116px;top:993px;width:58px;height:17px;background:#5c5c5c"></div>
<div class="t s" style="left:1187px;top:995px;font-size:10.5px">Y:</div>
<div style="left:1198px;top:993px;width:58px;height:17px;background:#5c5c5c"></div>
<div class="t s" style="left:1269px;top:995px;font-size:10.5px">Z:</div>
<div style="left:1283px;top:993px;width:58px;height:17px;background:#5c5c5c"></div>
<div class="t s" style="left:1356px;top:995px">Grid = 25,4cm</div>
<div class="t s" style="left:1357px;top:1021px;font-size:10.6px">Add Time Tag</div>
<div class="t s" style="left:1494px;top:1018px">215</div>
<div style="left:1644px;top:991px;width:46px;height:21px;background:#5e5e5e;border-radius:2px"></div>
<div class="t s" style="left:1644px;top:995px;width:46px;text-align:center;font-size:10.5px">Auto Key</div>
<div class="t s" style="left:1700px;top:994px">Selected</div>
<div style="left:1644px;top:1014px;width:46px;height:20px;background:#5e5e5e;border-radius:2px"></div>
<div class="t s" style="left:1644px;top:1017px;width:46px;text-align:center;font-size:10.5px">Set Key</div>
<div style="left:1721px;top:1014px;width:88px;height:20px;background:#666;border-radius:2px"></div>
<div class="t s" style="left:1721px;top:1018px;width:88px;text-align:center">Key Filters...</div>

<!-- taskbar -->
<div style="left:0;top:1040px;width:1920px;height:8px;background:linear-gradient(90deg,#23414f 0,#1f3b4a 50%,#1a2c3c 100%)"></div>
<div style="left:48px;top:1040px;width:344px;height:8px;background:#f1f1f1"></div>
<div style="left:785px;top:1040px;width:48px;height:8px;background:#4d6773"></div>
<div class="t" style="left:1820px;top:1042px;font-size:11px;color:#fff">0:47</div>

</body></html>
